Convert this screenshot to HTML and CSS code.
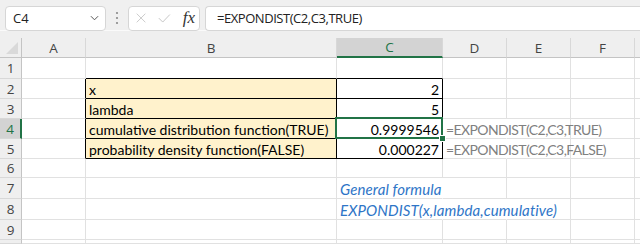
FILE: index.html
```html
<!DOCTYPE html>
<html lang="en">
<head>
  <meta charset="UTF-8">
  <title>EXPONDIST - Sheet1</title>
  <link rel="stylesheet" href="styles.css">
</head>
<body>
  <div class="formula-bar">
    <div class="name-box">
      <span>C4</span>
      <svg class="chevron" viewBox="0 0 10 6" fill="none"><path d="M1 1L5 5L9 1" stroke="#555" stroke-width="1.1"/></svg>
    </div>
    <svg class="grip" viewBox="0 0 4 16"><circle cx="2" cy="3" r="1.1" fill="#8a8a8a"/><circle cx="2" cy="8" r="1.1" fill="#8a8a8a"/><circle cx="2" cy="13" r="1.1" fill="#8a8a8a"/></svg>
    <div class="fx-box">
      <svg class="fx-icon" viewBox="0 0 14 14" fill="none"><path d="M1 1L13 13M13 1L1 13" stroke="#c4c4c4" stroke-width="1.2"/></svg>
      <svg class="fx-icon check" viewBox="0 0 16 12" fill="none"><path d="M1 5.5L6 10.5L15 1" stroke="#c4c4c4" stroke-width="1.2"/></svg>
      <span class="fx">fx</span>
    </div>
    <div class="formula-input">=EXPONDIST(C2,C3,TRUE)</div>
  </div>

  <div class="sheet">
    <!-- column headers -->
    <div class="corner"><svg viewBox="0 0 12 12"><path d="M12 0V12H0Z" fill="#d9d9d9"/></svg></div>
    <div class="col-head">A</div>
    <div class="col-head">B</div>
    <div class="col-head active">C</div>
    <div class="col-head">D</div>
    <div class="col-head">E</div>
    <div class="col-head">F</div>
    <div class="col-head"></div>

    <!-- row 1 -->
    <div class="row-head">1</div>
    <div class="cell"></div>
    <div class="cell edge-b"></div>
    <div class="cell edge-b"></div>
    <div class="cell"></div>
    <div class="cell"></div>
    <div class="cell"></div>
    <div class="cell"></div>

    <!-- row 2 -->
    <div class="row-head">2</div>
    <div class="cell edge-r"></div>
    <div class="cell boxed label">x</div>
    <div class="cell boxed num">2</div>
    <div class="cell"></div>
    <div class="cell"></div>
    <div class="cell"></div>
    <div class="cell"></div>

    <!-- row 3 -->
    <div class="row-head">3</div>
    <div class="cell edge-r"></div>
    <div class="cell boxed label">lambda</div>
    <div class="cell boxed num">5</div>
    <div class="cell"></div>
    <div class="cell"></div>
    <div class="cell"></div>
    <div class="cell"></div>

    <!-- row 4 -->
    <div class="row-head active">4</div>
    <div class="cell edge-r"></div>
    <div class="cell boxed label">cumulative distribution function(TRUE)</div>
    <div class="cell boxed num selected">0.9999546</div>
    <div class="cell note spill open-r">=EXPONDIST(C2,C3,TRUE)</div>
    <div class="cell"></div>
    <div class="cell"></div>
    <div class="cell"></div>

    <!-- row 5 -->
    <div class="row-head">5</div>
    <div class="cell edge-r"></div>
    <div class="cell boxed label">probability density function(FALSE)</div>
    <div class="cell boxed num">0.000227</div>
    <div class="cell note spill open-r">=EXPONDIST(C2,C3,FALSE)</div>
    <div class="cell"></div>
    <div class="cell"></div>
    <div class="cell"></div>

    <!-- row 6 -->
    <div class="row-head">6</div>
    <div class="cell"></div>
    <div class="cell"></div>
    <div class="cell"></div>
    <div class="cell"></div>
    <div class="cell"></div>
    <div class="cell"></div>
    <div class="cell"></div>

    <!-- row 7 -->
    <div class="row-head">7</div>
    <div class="cell"></div>
    <div class="cell"></div>
    <div class="cell hint spill open-r">General formula</div>
    <div class="cell"></div>
    <div class="cell"></div>
    <div class="cell"></div>
    <div class="cell"></div>

    <!-- row 8 -->
    <div class="row-head">8</div>
    <div class="cell"></div>
    <div class="cell"></div>
    <div class="cell hint spill open-r">EXPONDIST(x,lambda,cumulative)</div>
    <div class="cell open-r"></div>
    <div class="cell"></div>
    <div class="cell"></div>
    <div class="cell"></div>

    <!-- row 9 -->
    <div class="row-head">9</div>
    <div class="cell"></div>
    <div class="cell"></div>
    <div class="cell"></div>
    <div class="cell"></div>
    <div class="cell"></div>
    <div class="cell"></div>
    <div class="cell"></div>

    <!-- row 10, only its top edge is in view -->
    <div class="row-head"></div>
    <div class="cell"></div>
    <div class="cell"></div>
    <div class="cell"></div>
    <div class="cell"></div>
    <div class="cell"></div>
    <div class="cell"></div>
    <div class="cell"></div>
  </div>
</body>
</html>
```

FILE: styles.css
```css
:root {
  --green: #217346;
  --grid: #e1e1e1;
  --head-bg: #efefef;
  --head-line: #c4c4c4;
  --head-text: #444;
  --fill: #fff2cc;
}

html, body {
  margin: 0;
  padding: 0;
  width: 640px;
  height: 244px;
  overflow: hidden;
  background: var(--head-bg);
}

body {
  font-family: 'Open Sans', 'Noto Sans', sans-serif;
  color: #222;
}

/* formula bar */
.formula-bar {
  display: flex;
  align-items: center;
  height: 31px;
  padding: 0 0 0 5px;
  background: #f0f0f0;
  border-bottom: 1px solid #fafafa;
  box-sizing: border-box;
}

.name-box,
.fx-box,
.formula-input {
  height: 25px;
  margin-top: 6px;
  background: #fff;
  border: 1px solid #d6d6d6;
  border-radius: 4px;
  box-sizing: border-box;
  display: flex;
  align-items: center;
}

.name-box {
  width: 101px;
  padding: 0 6px 0 7px;
  justify-content: space-between;
  font-size: 13px;
}

.chevron {
  width: 9px;
  height: 6px;
}

.grip {
  width: 4px;
  height: 16px;
  margin: 6px 9px 0 9px;
}

.fx-box {
  width: 72px;
  padding: 0 4px 0 7px;
  gap: 12px;
}

.fx-icon {
  width: 12px;
  height: 12px;
}

.fx-icon.check {
  width: 15px;
  height: 11px;
}

.fx {
  font-family: 'Liberation Serif', serif;
  font-style: italic;
  font-size: 17px;
  color: #333;
}

.formula-input {
  flex: 1;
  margin-left: 5px;
  padding-left: 11px;
  border-right: none;
  border-radius: 4px 0 0 4px;
  font-size: 13px;
  letter-spacing: -0.45px;
}

/* grid */
.sheet {
  display: grid;
  grid-template-columns: 22px 64px 251px 106px 64px 64px 64px 1fr;
  grid-template-rows: 20px 21px 20px 20px 20px 20px 19px 21px 21px 20px 4px;
  margin-top: 7px;
}

.corner {
  background: var(--head-bg);
  border-right: 1px solid var(--head-line);
  border-bottom: 1px solid var(--head-line);
  box-sizing: border-box;
  display: flex;
  align-items: flex-end;
  justify-content: flex-end;
  padding: 0 3px 3px 0;
}

.corner svg {
  width: 12px;
  height: 12px;
}

.col-head {
  background: var(--head-bg);
  border-right: 1px solid #d8d8d8;
  border-bottom: 1px solid var(--head-line);
  box-sizing: border-box;
  font-size: 13.5px;
  color: var(--head-text);
  display: flex;
  align-items: center;
  justify-content: center;
}

.col-head.active {
  background: #d3d3d3;
  color: var(--green);
  border-bottom: 2px solid var(--green);
}

.row-head {
  background: var(--head-bg);
  border-right: 1px solid var(--head-line);
  border-bottom: 1px solid #d8d8d8;
  box-sizing: border-box;
  font-size: 13.5px;
  color: var(--head-text);
  display: flex;
  align-items: center;
  justify-content: center;
}

.row-head.active {
  background: #d3d3d3;
  color: var(--green);
  border-right: 2px solid var(--green);
}

.cell {
  background: #fff;
  border-right: 1px solid var(--grid);
  border-bottom: 1px solid var(--grid);
  box-sizing: border-box;
  font-family: 'Lato', 'Open Sans', sans-serif;
  font-size: 14px;
  display: flex;
  align-items: center;
  padding: 1px 3px 0 3px;
  white-space: nowrap;
  position: relative;
}

.edge-b {
  border-bottom-color: #000;
}

.edge-r {
  border-right-color: #000;
}

.boxed {
  border-right-color: #000;
  border-bottom-color: #000;
}

.label {
  background: var(--fill);
  color: #000;
}

.num {
  justify-content: flex-end;
  color: #000;
}

/* text that runs on into the next cells sits above them and hides the gridline */
.spill {
  z-index: 2;
}

.open-r {
  border-right-color: #fff;
}

.note {
  color: #808080;
  letter-spacing: -0.6px;
}

.hint {
  color: #2e75c7;
  font-style: italic;
  font-size: 15px;
  letter-spacing: 0.1px;
}

/* active cell */
.selected::after {
  content: "";
  position: absolute;
  left: -2px;
  top: -2px;
  right: -1px;
  bottom: -1px;
  border: 2px solid var(--green);
}

.selected::before {
  content: "";
  position: absolute;
  right: -4px;
  bottom: -4px;
  width: 5px;
  height: 5px;
  background: var(--green);
  border: 1px solid #fff;
  z-index: 3;
}
```
